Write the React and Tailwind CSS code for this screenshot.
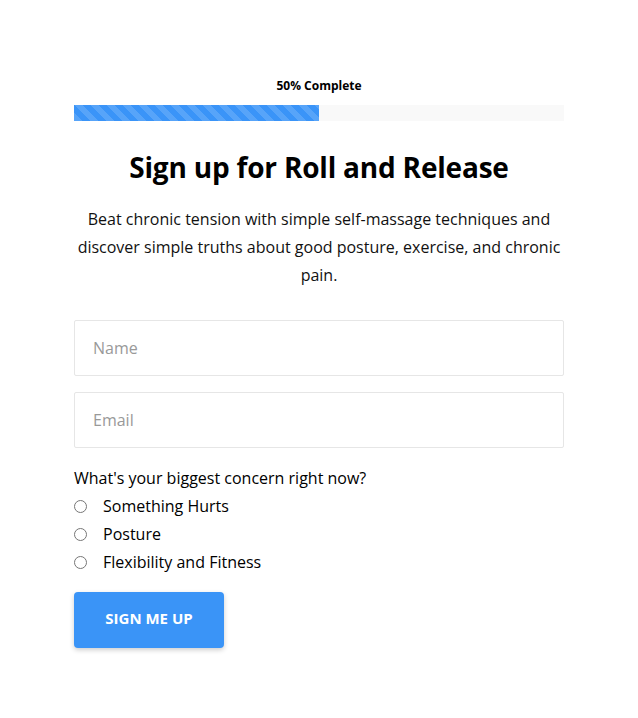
export default function App() {
  const options = ["Something Hurts", "Posture", "Flexibility and Fitness"];

  return (
    <div className="min-h-screen w-full bg-white font-['Open_Sans',sans-serif] text-black">
      <div className="mx-auto w-[490px] pt-[77px]">
        <div className="text-center text-[12px] font-bold leading-[18px]">
          50% Complete
        </div>
        <div className="mt-[10px] h-4 w-full bg-[#f9f9f9]">
          <div className="h-full w-1/2 bg-[#3a94f8] bg-[linear-gradient(45deg,rgba(255,255,255,.15)_25%,transparent_25%,transparent_50%,rgba(255,255,255,.15)_50%,rgba(255,255,255,.15)_75%,transparent_75%,transparent)] bg-[length:16px_16px]" />
        </div>

        <h1 className="mt-[26px] text-center text-[28px] font-bold leading-[40px] tracking-[-0.2px]">
          Sign up for Roll and Release
        </h1>
        <p className="mt-[18px] text-center text-[16px] leading-[28px] text-[#111]">
          Beat chronic tension with simple self-massage techniques and discover
          simple truths about good posture, exercise, and chronic pain.
        </p>

        <form className="mt-[31px]">
          <input
            type="text"
            placeholder="Name"
            className="block h-[56px] w-full rounded-[2px] border border-[#e6e6e6] px-[18px] text-[16px] outline-none placeholder:text-[#999]"
          />
          <input
            type="email"
            placeholder="Email"
            className="mt-4 block h-[56px] w-full rounded-[2px] border border-[#e6e6e6] px-[18px] text-[16px] outline-none placeholder:text-[#999]"
          />

          <div className="mt-[18px] text-[16px] leading-[24px]">
            What's your biggest concern right now?
          </div>
          <div className="mt-[2px] flex flex-col">
            {options.map((o) => (
              <label key={o} className="flex h-[28px] items-center text-[16px]">
                <input
                  type="radio"
                  name="concern"
                  className="m-0 h-[13px] w-[13px]"
                />
                <span className="ml-[16px]">{o}</span>
              </label>
            ))}
          </div>

          <button
            type="button"
            className="mt-[16px] h-[56px] w-[150px] rounded-[4px] bg-[#3a94f7] pb-[3px] text-[15px] font-bold text-white shadow-[0_2px_5px_rgba(0,0,0,0.2)]"
          >
            SIGN ME UP
          </button>
        </form>
      </div>
    </div>
  );
}
